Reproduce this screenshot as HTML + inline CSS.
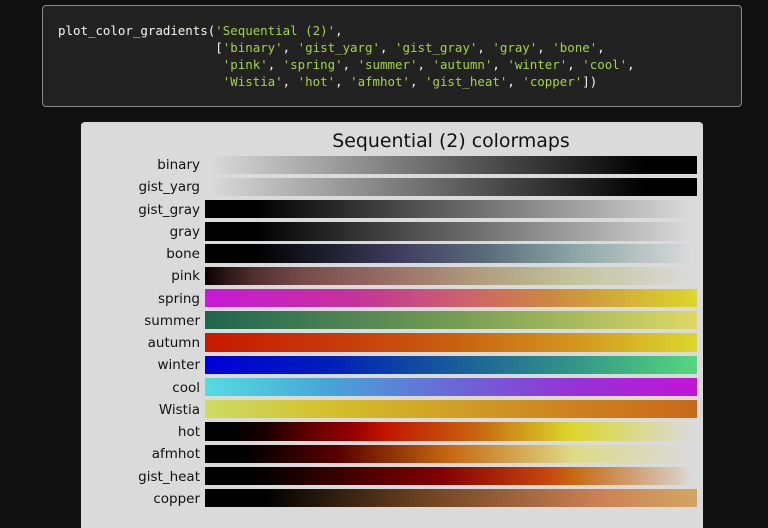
<!DOCTYPE html>
<html>
<head>
<meta charset="utf-8">
<style>
html,body{margin:0;padding:0;width:768px;height:528px;overflow:hidden;background:#111;}
#code{position:absolute;left:42px;top:5px;width:698px;height:100px;background:#222;border:1px solid #8a8a8a;border-radius:4px;}
#code pre{position:absolute;left:15px;top:16px;margin:0;font:12.45px/17px "DejaVu Sans Mono","Liberation Mono",monospace;color:#f4f4ee;white-space:pre;filter:blur(.25px);}
#code b{font-weight:normal;color:#a2d444;}
#fig{position:absolute;left:81px;top:122px;width:622px;height:406px;background:#dadada;border-radius:4px 4px 0 0;font-family:"DejaVu Sans","Liberation Sans",sans-serif;color:#111;overflow:hidden;}
#title{position:absolute;left:0;top:7px;width:740px;text-align:center;font-size:18.9px;line-height:24px;white-space:nowrap;filter:blur(.25px);}
.l{position:absolute;right:503px;font-size:13.5px;line-height:18px;white-space:nowrap;filter:blur(.25px);}
.g{position:absolute;left:124px;width:492px;height:18.4px;filter:blur(.3px);}
</style>
</head>
<body>
<div id="code"><pre>plot_color_gradients(<b>'Sequential (2)'</b>,
                     [<b>'binary'</b>, <b>'gist_yarg'</b>, <b>'gist_gray'</b>, <b>'gray'</b>, <b>'bone'</b>,
                      <b>'pink'</b>, <b>'spring'</b>, <b>'summer'</b>, <b>'autumn'</b>, <b>'winter'</b>, <b>'cool'</b>,
                      <b>'Wistia'</b>, <b>'hot'</b>, <b>'afmhot'</b>, <b>'gist_heat'</b>, <b>'copper'</b>])</pre></div>
<div id="fig">
<div id="title">Sequential (2) colormaps</div>
<div class="l" style="top:34px">binary</div><div class="g" style="top:33.5px;background:linear-gradient(90deg,#dadada 1%,#000 89.6%)"></div>
<div class="l" style="top:56px">gist_yarg</div><div class="g" style="top:55.7px;background:linear-gradient(90deg,#dadada 1%,#000 89.6%)"></div>
<div class="l" style="top:79px">gist_gray</div><div class="g" style="top:78px;background:linear-gradient(90deg,#000 10%,#dadada 99%)"></div>
<div class="l" style="top:101px">gray</div><div class="g" style="top:100.2px;background:linear-gradient(90deg,#000 10%,#dadada 99%)"></div>
<div class="l" style="top:123px">bone</div><div class="g" style="top:122.4px;background:linear-gradient(90deg,#000 10%,rgb(64,62,96) 40%,rgb(92,110,125) 58%,rgb(138,165,165) 74.6%,#dadada 99%)"></div>
<div class="l" style="top:145px">pink</div><div class="g" style="top:144.7px;background:linear-gradient(90deg,rgb(10,0,0),rgb(50,25,25) 5%,rgb(80,47,47) 10%,rgb(120,75,75) 20%,rgb(158,115,105) 40%,rgb(175,155,125) 55%,rgb(195,195,155) 74.6%,#dadada 99%)"></div>
<div class="l" style="top:168px">spring</div><div class="g" style="top:166.9px;background:linear-gradient(90deg,rgb(200,25,215),rgb(197,50,155) 30%,rgb(203,92,115) 50%,rgb(205,135,65) 70%,rgb(220,215,45))"></div>
<div class="l" style="top:190px">summer</div><div class="g" style="top:189.1px;background:linear-gradient(90deg,rgb(30,100,80),rgb(115,155,85) 50%,rgb(222,217,100))"></div>
<div class="l" style="top:212px">autumn</div><div class="g" style="top:211.4px;background:linear-gradient(90deg,rgb(200,25,0),rgb(200,55,10) 25%,rgb(200,95,15) 50%,rgb(210,150,30) 75%,rgb(220,215,45))"></div>
<div class="l" style="top:234px">winter</div><div class="g" style="top:233.6px;background:linear-gradient(90deg,rgb(0,0,215),rgb(0,30,185) 25%,rgb(25,90,155) 50%,rgb(50,150,135) 75%,rgb(85,215,125))"></div>
<div class="l" style="top:257px">cool</div><div class="g" style="top:255.8px;background:linear-gradient(90deg,rgb(85,220,225),rgb(70,165,215) 25%,rgb(105,105,215) 50%,rgb(150,50,215) 75%,rgb(195,20,215))"></div>
<div class="l" style="top:279px">Wistia</div><div class="g" style="top:278.1px;background:linear-gradient(90deg,rgb(205,220,100),rgb(212,192,45) 25%,rgb(208,160,38) 50%,rgb(205,130,30) 75%,rgb(200,105,25))"></div>
<div class="l" style="top:301px">hot</div><div class="g" style="top:300.3px;background:linear-gradient(90deg,#000 5%,rgb(25,0,0) 12%,rgb(88,0,0) 20%,rgb(150,0,0) 30%,rgb(195,20,0) 36.5%,rgb(200,100,15) 55%,rgb(220,215,45) 74.6%,#dadada 99%)"></div>
<div class="l" style="top:323px">afmhot</div><div class="g" style="top:322.5px;background:linear-gradient(90deg,#000 8%,rgb(90,0,0) 27%,rgb(200,105,20) 50%,rgb(222,218,135) 75%,#dadada 99%)"></div>
<div class="l" style="top:346px">gist_heat</div><div class="g" style="top:344.8px;background:linear-gradient(90deg,#000 10%,rgb(130,0,0) 47.7%,rgb(200,70,15) 70%,rgb(200,105,20) 75%,rgb(217,200,185) 96%,#dadada 99%)"></div>
<div class="l" style="top:368px">copper</div><div class="g" style="top:367px;background:linear-gradient(90deg,#000 12%,rgb(110,68,35) 45%,rgb(205,130,85) 80.9%,rgb(210,165,100))"></div>
</div>
</body>
</html>
